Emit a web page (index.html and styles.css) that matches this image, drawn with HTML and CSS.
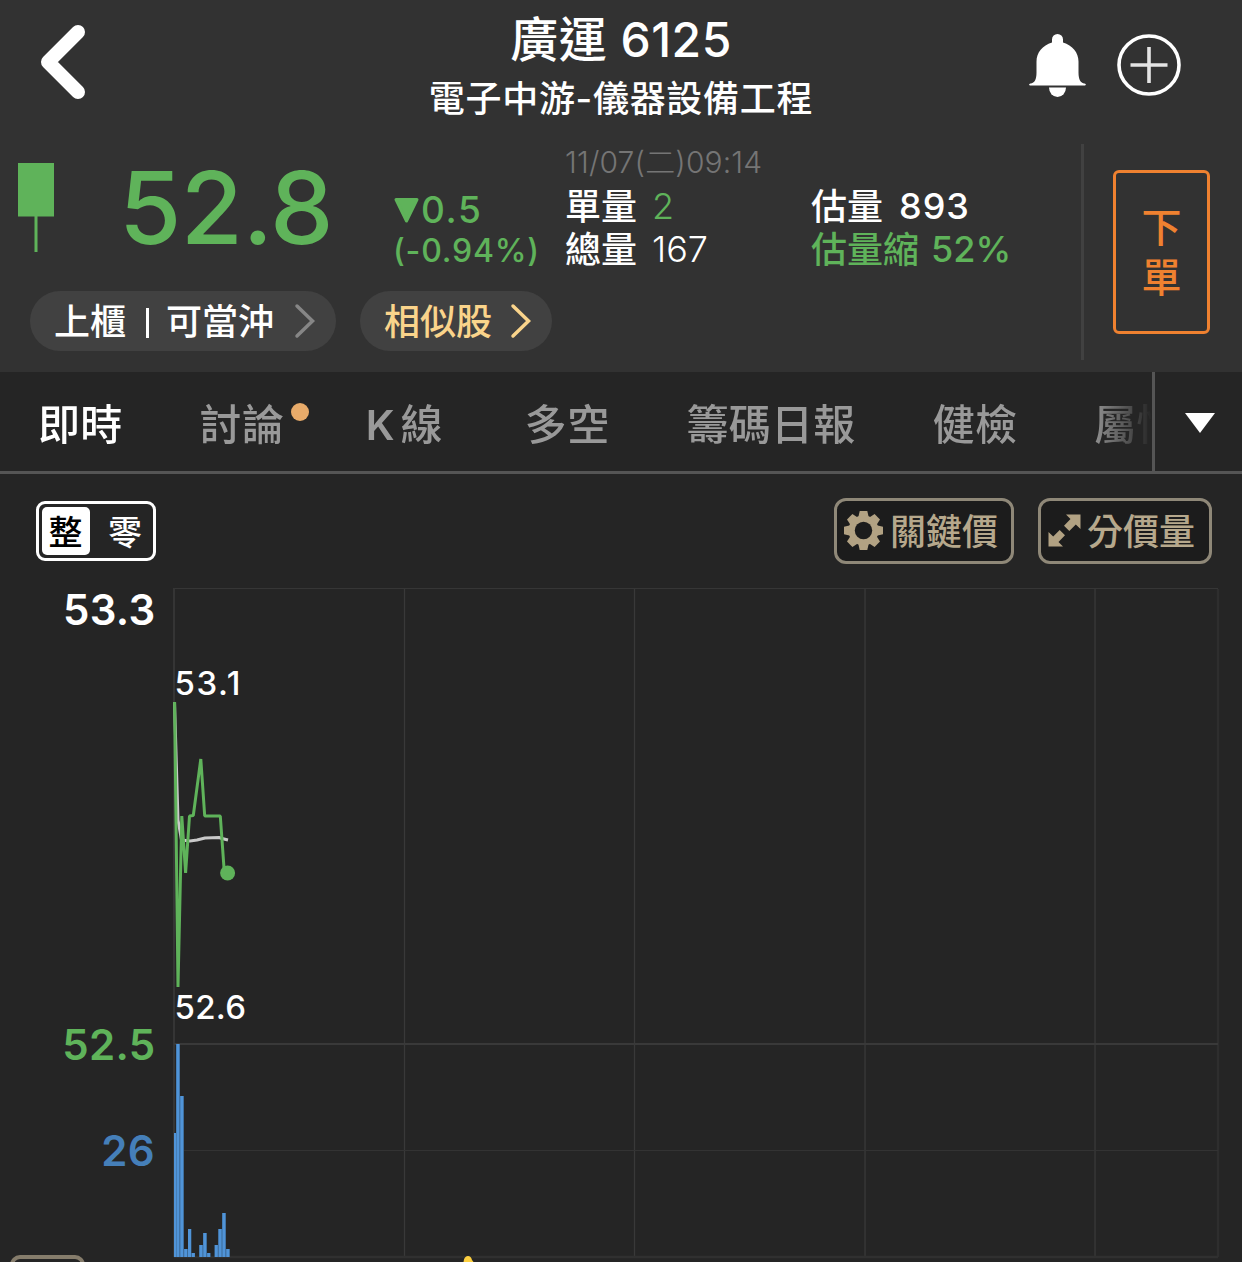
FILE: index.html
```html
<!DOCTYPE html>
<html lang="zh-Hant">
<head>
<meta charset="utf-8">
<title>廣運 6125</title>
<link rel="stylesheet" href="styles.css">
</head>
<body>
<header class="header">
  <div class="topbar">
    <svg class="back" width="54" height="84" viewBox="0 0 54 84"><path d="M42 12 12 42 42 72" fill="none" stroke="#fff" stroke-width="14" stroke-linecap="round" stroke-linejoin="round"/></svg>
    <div class="titles">
      <h1 class="title">廣運 6125</h1>
      <p class="subtitle">電子中游-儀器設備工程</p>
    </div>
    <div class="actions">
      <svg width="58" height="64" viewBox="0.500 0.500 58 64" fill="#fff"><path d="M23.500 9V6a5.500 5.500 0 0 1 11 0V9C44 12 50 19 50 28V39C50 46 52 49.500 56 50C58 50.500 57.500 52 56 52H2C.5 52 0 50.500 2 50C6 49.500 8 46 8 39V28C8 19 14 12 23.500 9Z"/><path d="M20.500 54h17a8.500 9.500 0 0 1-17 0Z"/></svg>
      <svg width="64" height="64" viewBox="0 1 64 64" fill="none" stroke="#fff"><ellipse cx="32" cy="32" rx="30" ry="29" stroke-width="3.600"/><path d="M32 14V50M13.500 32H50.500" stroke-width="3.600" stroke="#e4e4e4"/></svg>
    </div>
  </div>
  <div class="quote">
    <div class="summary">
      <div class="figures">
        <svg class="candle" width="36" height="90" viewBox="0 0 36 90" fill="#5fb35a"><path d="M0 0H36V53.500H19.500V89H16.500V53.500H0Z"/></svg>
        <div class="price">52.8</div>
        <div class="change">
          <div class="diff"><svg width="25" height="25" viewBox="0 0 25 25"><path d="M2 1.500H23L12.500 23Z" fill="#5fb35a" stroke="#5fb35a" stroke-width="3" stroke-linejoin="round"/></svg><span>0.5</span></div>
          <div class="percent">(-0.94%)</div>
        </div>
        <div class="volume">
          <div class="time">11/07(二)09:14</div>
          <div class="stat"><span class="label">單量</span><span class="light down">2</span></div>
          <div class="stat"><span class="label">總量</span><span class="light">167</span></div>
        </div>
        <div class="estimate">
          <div class="stat"><span class="label">估量</span><span class="spaced">893</span></div>
          <div class="stat shrink down"><span class="label">估量縮</span><span>52%</span></div>
        </div>
      </div>
      <div class="chips">
        <div class="chip market"><span>上櫃</span><i class="bar"></i><span>可當沖</span><svg width="20" height="34" viewBox="0 0 20 34"><path d="M2 2 17.500 17 2 32" fill="none" stroke="#868686" stroke-width="3.500" stroke-linecap="round"/></svg></div>
        <div class="chip similar"><span>相似股</span><svg width="20" height="34" viewBox="0 0 20 34"><path d="M2 2 17.500 17 2 32" fill="none" stroke="#fad48b" stroke-width="3.500" stroke-linecap="round"/></svg></div>
      </div>
    </div>
    <div class="order"><button class="order-btn"><span>下</span><span>單</span></button></div>
  </div>
</header>
<nav class="tabs">
  <div class="tab-list">
    <span class="tab active">即時</span>
    <span class="tab dotted">討論</span>
    <span class="tab kline"><span class="k">K</span>線</span>
    <span class="tab">多空</span>
    <span class="tab">籌碼日報</span>
    <span class="tab">健檢</span>
    <span class="tab">屬性</span>
  </div>
  <div class="more"><svg width="30" height="20" viewBox="0 0 30 20"><path d="M0 0H30L15 20Z" fill="#fff"/></svg></div>
</nav>
<main>
  <div class="toolbar">
    <div class="toggle"><span class="on">整</span><span>零</span></div>
    <div class="tools">
      <button class="tool key"><svg width="40" height="40" viewBox="-19.500 -19.500 40 40"><g fill="#b2a283"><g id="teeth"><path id="t" d="M-5.500-12 -3.800-19.500H3.800L5.500-12V12L3.800 19.500H-3.800L-5.500 12Z"/><use href="#t" transform="rotate(90)"/></g><use href="#teeth" transform="rotate(45)"/><circle r="15"/></g><circle r="8.700" fill="#1c1c1c"/></svg><span>關鍵價</span></button>
      <button class="tool dist"><svg width="34" height="34" viewBox="0.500 0.500 34 34" fill="#b2a283"><path d="M18.500 1H33V15.500L28.300 11 21.800 17.500 16.500 12.200 23 5.500Z"/><path d="M15.500 33H1V18.500L5.700 23 12.200 16.500 17.500 21.800 11 28.500Z"/></svg><span>分價量</span></button>
    </div>
  </div>
  <svg class="chart" width="1242" height="681" viewBox="0 574 1242 681">
    <g fill="none" stroke="#393939">
      <path d="M173 588.500H1218" stroke="#363636"/>
      <path d="M174 588V1257" stroke-width="2" stroke="#353535"/>
      <path d="M404.500 589V1257M634.500 589V1257M865 589V1257M1095 589V1257" stroke-width="1.300"/>
      <path d="M1218 589V1257" stroke-width="2.500" stroke="#2e2e2e"/>
      <path d="M174 1044H1218" stroke-width="2"/>
      <path d="M174 1150.500H1218" stroke="#333"/>
      <path d="M174 1257H1218" stroke-width="2.500" stroke="#303030"/>
    </g>
    <g fill="#376088">
      <path d="M174 1257V1133H176V1044H180V1096H184V1249H188V1229H191.500V1253H195V1257ZM199 1257V1245H203V1233H207V1253H210.500V1257ZM214.500 1257V1245H218V1229H222V1213H226V1249H230V1257Z"/>
    </g>
    <g fill="#5094d8">
      <path d="M174 1133h2v124h-2ZM176.400 1044h3v213h-3ZM180.300 1096h3v161h-3ZM184.200 1249h3v8h-3ZM188 1229h3v28h-3ZM191.800 1253h3v4h-3ZM199.500 1245h3v12h-3ZM203.300 1233h3v24h-3ZM207.200 1253h3v4h-3ZM214.800 1245h3v12h-3ZM218.600 1229h3v28h-3ZM222.400 1213h3v44h-3ZM226.300 1249h3v8h-3Z"/>
    </g>
    <path d="M174.500 702 178 820 181.500 840 190 841 197 840 205 838 219 837.500 222 838.500 228 840" fill="none" stroke="#c9c9c9" stroke-width="3" stroke-linejoin="bevel"/>
    <path d="M174.600 702 178 987 181.800 816 185.600 873 189.500 816 193.300 815.500 200.800 759 204.700 816H220.300L224 868 228 873" fill="none" stroke="#5fb35a" stroke-width="3" stroke-linejoin="bevel"/>
    <circle cx="227.600" cy="873" r="7.500" fill="#5fb35a"/>
    <g class="axis" text-anchor="end">
      <text x="155.500" y="625" fill="#fff">53.3</text>
      <text x="155.500" y="1060" fill="#5fb35a">52.5</text>
      <text x="155" y="1166" fill="#457fb9">26</text>
    </g>
    <g class="mark" fill="#fff">
      <text x="174.500" y="695" class="high">53.1</text>
      <text x="174.500" y="1019">52.6</text>
    </g>
  </svg>
  <div class="peek">
    <div class="peek-box"></div>
    <svg width="14" height="7" viewBox="0 0 14 7"><path d="M2.500 7 3 4.500Q4 1 7 1T11 5L12.500 7Z" fill="#fdd040"/></svg>
  </div>
</main>
</body>
</html>
```
FILE: styles.css
```css
* { box-sizing: border-box; margin: 0; padding: 0; }
html { background: #252525; }
body {
  width: 1242px; height: 1262px; overflow: hidden;
  background: #252525; color: #fff;
  font-family: Inter, "Noto Sans CJK TC", sans-serif;
  font-weight: 500; white-space: nowrap;
}
svg { display: block; flex: none; overflow: visible; }
button { font: inherit; color: inherit; background: none; border: 0; }
.header { height: 372px; background: #323232; }

.topbar { height: 141px; display: grid; grid-template-columns: 300px 1fr 300px; }
.back { margin: 20px 0 0 36px; }
.titles { text-align: center; padding-top: 9px; }
.title { font-size: 48px; line-height: 62px; font-weight: 500; letter-spacing: .5px; }
.subtitle { font-size: 36px; line-height: 56px; letter-spacing: .7px; }
.actions { display: flex; gap: 30px; padding: 34px 0 0 87px; }

.quote { display: flex; height: 231px; }
.summary { width: 1081px; }
.figures { display: flex; height: 150px; }
.candle { margin: 22px 0 0 18px; }
.price { width: 340px; padding-left: 65px; font-size: 101px; line-height: 132px; color: #5fb35a; letter-spacing: -.6px; }
.change { width: 171px; padding-top: 49px; color: #5fb35a; }
.diff { display: flex; align-items: center; gap: 2px; font-size: 37px; line-height: 40px; letter-spacing: 1.6px; }
.percent { margin-left: -1px; font-size: 32px; line-height: 41px; letter-spacing: .8px; }
.volume { width: 246px; }
.time { font-size: 30px; line-height: 43px; font-weight: 300; color: #757575; letter-spacing: .15px; }
.stat { display: flex; gap: 16px; font-size: 36px; line-height: 43px; position: relative; top: 1px; }
.stat .label { padding-top: 1px; margin-bottom: -1px; }
.estimate { padding-top: 43px; }
.stat.shrink { gap: 12px; }
.light { font-weight: 300; margin-left: -1px; }
.spaced { letter-spacing: 1px; }
.down { color: #5fb35a; }

.chips { display: flex; gap: 24px; padding-left: 30px; }
.chip { height: 60px; border-radius: 30px; background: #414141; display: flex; align-items: center; font-size: 36px; line-height: 56px; }
.chip span { padding-top: 1px; }
.market { width: 306px; padding-left: 24px; }
.bar { width: 3px; height: 30px; background: #fff; margin: 4px 17px 0 20px; }
.market svg { margin-left: 21px; }
.similar { width: 192px; padding-left: 24px; color: #fad48b; }
.similar svg { margin-left: 19px; }

.order { width: 161px; height: 216px; margin-top: 3px; border-left: 3px solid #414141; padding: 26px 0 0 29px; }
.order-btn { width: 97px; height: 164px; border: 3px solid #ef8130; border-radius: 6px; color: #ef8130; display: flex; flex-direction: column; align-items: center; justify-content: center; font-size: 40px; line-height: 50px; padding-top: 2px; }

.tabs { display: flex; height: 102px; border-bottom: 3px solid #555; }
.tab-list { width: 1152px; display: flex; align-items: center; gap: 77px; padding-left: 38px; overflow: hidden; font-size: 42px; color: #999; letter-spacing: .3px;
  -webkit-mask-image: linear-gradient(to right, #000 1090px, transparent 1152px); mask-image: linear-gradient(to right, #000 1090px, transparent 1152px); }
.tab { flex: none; line-height: 60px; padding-top: 6px; }
.tab.active { color: #fff; }
.dotted { position: relative; margin-right: 5px; }
.dotted::after { content: ""; position: absolute; left: 91.5px; top: 14px; width: 18px; height: 18px; border-radius: 50%; background: #e8ab6a; }
.kline { margin-right: 5px; margin-left: -.5px; }
.k { letter-spacing: 6px; font-size: 41px; font-weight: 600; }
.more { width: 90px; border-left: 3px solid #555; padding: 41px 0 0 30px; }

.toolbar { height: 100px; display: flex; justify-content: space-between; padding: 24px 30px 0 36px; }
.toggle { width: 120px; height: 60px; margin-top: 3px; padding: 3px; border: 3px solid #fff; border-radius: 9px; display: flex; gap: 11px; font-size: 34px; line-height: 51px; text-align: center; }
.toggle span { width: 48px; height: 48px; }
.toggle .on { background: #fff; color: #000; border-radius: 5px; text-indent: -1px; }
.tools { display: flex; gap: 24px; }
.tool { height: 66px; border: 3px solid #8f8878; border-radius: 12px; background: #1c1c1c; color: #b6a88c; display: flex; align-items: center; font-size: 36px; line-height: 56px; padding-left: 7px; }
.tool span { padding-top: 1px; }
.key { width: 180px; gap: 6px; }
.dist { width: 174px; gap: 5px; }

.axis { font-size: 42px; font-weight: 600; letter-spacing: .3px; }
.mark { font-size: 33px; font-weight: 500; letter-spacing: .3px; }
.high { letter-spacing: 1.6px; }
.chart { display: block; }
.peek { height: 7px; display: flex; gap: 376px; padding-left: 10px; overflow: hidden; }
.peek-box { width: 75px; height: 60px; flex: none; border: 4px solid #857c6b; border-radius: 10px; }
```
